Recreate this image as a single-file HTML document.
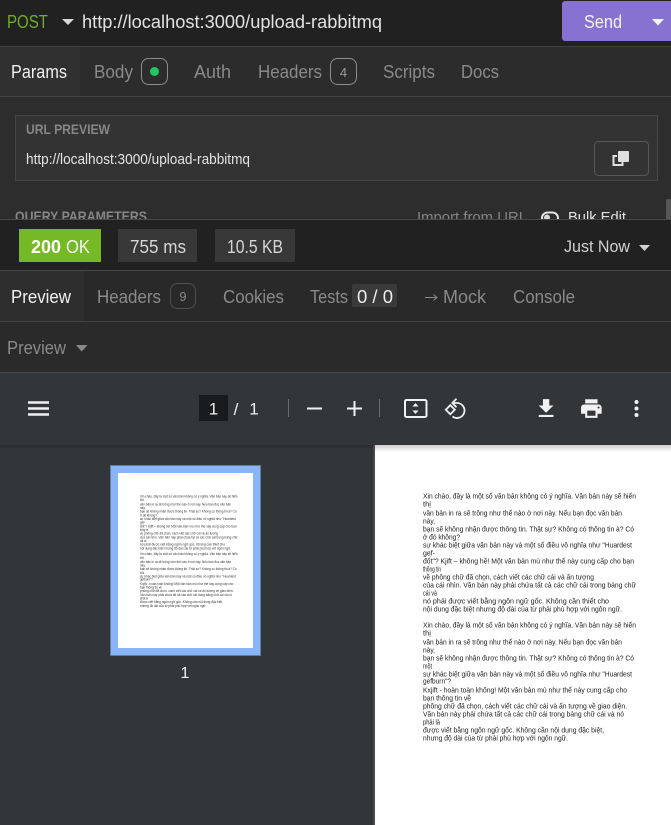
<!DOCTYPE html>
<html lang="vi">
<head>
<meta charset="utf-8">
<title>Insomnia</title>
<style>
html,body{margin:0;padding:0;width:671px;height:825px;overflow:hidden;background:#212121}
svg{display:block;font-family:"Liberation Sans","DejaVu Sans",sans-serif}
.t{font-size:18px}
.m{fill:#8a8a8a}
.a{fill:#f0f0f0}
.p text{font-size:7.3px;fill:#1c1c1c}
.th text{font-size:3.4px;fill:#333}
</style>
</head>
<body>
<svg xmlns="http://www.w3.org/2000/svg" width="671" height="825" viewBox="0 0 671 825">
<defs>
<linearGradient id="sh" x1="0" y1="0" x2="0" y2="1"><stop offset="0" stop-color="#000" stop-opacity=".2"/><stop offset="1" stop-color="#000" stop-opacity="0"/></linearGradient>
</defs>

<!-- top bar -->
<rect width="671" height="46" fill="#212121"/>
<text class="t" x="7" y="28" textLength="41" lengthAdjust="spacingAndGlyphs" fill="#6fae25">POST</text>
<path d="M62 19h12l-6 6z" fill="#d8d8d8"/>
<text class="t" x="82" y="28" textLength="300" lengthAdjust="spacingAndGlyphs" fill="#e2e2e2">http://localhost:3000/upload-rabbitmq</text>
<path d="M565 1h106v40h-106a3 3 0 0 1-3-3v-34a3 3 0 0 1 3-3z" fill="#8672d1"/>
<text class="t" x="584" y="28" textLength="38" lengthAdjust="spacingAndGlyphs" fill="#f4f4f4">Send</text>
<path d="M652 19h12l-6 6.500z" fill="#f4f4f4"/>

<!-- request tabs -->
<rect y="46" width="671" height="51" fill="#2c2c2c"/>
<rect y="46" width="671" height="1" fill="#414141"/>
<rect y="47" width="80" height="49" fill="#303030"/>
<rect y="96" width="671" height="1" fill="#434343"/>
<text class="t a" x="11" y="78" textLength="56" lengthAdjust="spacingAndGlyphs">Params</text>
<text class="t m" x="94" y="78" textLength="39" lengthAdjust="spacingAndGlyphs">Body</text>
<rect x="141.500" y="58.500" width="26" height="26" rx="7" fill="none" stroke="#8c8c8c"/>
<circle cx="154.500" cy="71.500" r="4.500" fill="#21c562"/>
<text class="t m" x="194" y="78" textLength="37" lengthAdjust="spacingAndGlyphs">Auth</text>
<text class="t m" x="258" y="78" textLength="64" lengthAdjust="spacingAndGlyphs">Headers</text>
<rect x="330.500" y="58.500" width="26" height="26" rx="7" fill="none" stroke="#8c8c8c"/>
<text x="343.500" y="77" font-size="13" text-anchor="middle" fill="#9a9a9a">4</text>
<text class="t m" x="383" y="78" textLength="52" lengthAdjust="spacingAndGlyphs">Scripts</text>
<text class="t m" x="461" y="78" textLength="38" lengthAdjust="spacingAndGlyphs">Docs</text>

<!-- params content -->
<rect y="97" width="671" height="123" fill="#2d2d2d"/>
<rect x="15.500" y="115.500" width="642" height="65" fill="#333" stroke="#464646"/>
<text x="26" y="134" font-size="14" font-weight="700" textLength="84" lengthAdjust="spacingAndGlyphs" fill="#868686">URL PREVIEW</text>
<text x="26" y="164" font-size="15" textLength="224" lengthAdjust="spacingAndGlyphs" fill="#e4e4e4">http://localhost:3000/upload-rabbitmq</text>
<rect x="594.500" y="141.500" width="54" height="34" rx="4" fill="none" stroke="#585858"/>
<path d="M617 156h-3.500v9h9v-3" fill="none" stroke="#e0e0e0" stroke-width="2"/>
<rect x="618" y="151" width="11" height="11" rx="1" fill="#dedede"/>
<text x="15" y="221" font-size="14" font-weight="700" textLength="132" lengthAdjust="spacingAndGlyphs" fill="#868686">QUERY PARAMETERS</text>
<text x="417" y="222" font-size="15" textLength="110" lengthAdjust="spacingAndGlyphs" fill="#858585">Import from URL</text>
<rect x="542" y="212.500" width="16" height="11" rx="5.500" fill="none" stroke="#e4e4e4" stroke-width="2"/>
<circle cx="547" cy="217.500" r="3" fill="#d8d8d8"/>
<text x="568" y="222" font-size="15" textLength="58" lengthAdjust="spacingAndGlyphs" fill="#e2e2e2">Bulk Edit</text>
<rect x="666" y="199" width="5" height="22" rx="2" fill="#575757"/>

<!-- status bar -->
<rect y="219" width="671" height="52" fill="#212121"/>
<rect y="219" width="671" height="1" fill="#4a4a4a"/>
<rect x="19" y="229" width="82" height="33" fill="#75ba24"/>
<text x="31" y="253" font-size="18" font-weight="700" textLength="30" lengthAdjust="spacingAndGlyphs" fill="#fff">200</text>
<text x="66" y="253" font-size="18" textLength="24" lengthAdjust="spacingAndGlyphs" fill="#f6f6f6">OK</text>
<rect x="118" y="229" width="79" height="33" fill="#383838"/>
<text x="130" y="253" font-size="18" textLength="56" lengthAdjust="spacingAndGlyphs" fill="#d6d6d6">755 ms</text>
<rect x="215" y="229" width="80" height="33" fill="#383838"/>
<text x="227" y="253" font-size="18" textLength="56" lengthAdjust="spacingAndGlyphs" fill="#d6d6d6">10.5 KB</text>
<text x="564" y="252" font-size="17" textLength="66" lengthAdjust="spacingAndGlyphs" fill="#d2d2d2">Just Now</text>
<path d="M639 245h11l-5.500 6z" fill="#d2d2d2"/>

<!-- response tabs -->
<rect y="270" width="671" height="52" fill="#292929"/>
<rect y="270" width="671" height="1" fill="#464646"/>
<rect y="271" width="84" height="50" fill="#2e2e2e"/>
<rect y="321" width="671" height="1" fill="#434343"/>
<text class="t a" x="11" y="303" textLength="60" lengthAdjust="spacingAndGlyphs">Preview</text>
<text class="t m" x="97" y="303" textLength="64" lengthAdjust="spacingAndGlyphs">Headers</text>
<rect x="170.500" y="283.500" width="25" height="25" rx="7" fill="none" stroke="#4f4f4f"/>
<text x="183" y="301" font-size="12.500" text-anchor="middle" fill="#8a8a8a">9</text>
<text class="t m" x="223" y="303" textLength="61" lengthAdjust="spacingAndGlyphs">Cookies</text>
<text class="t m" x="310" y="303" textLength="38" lengthAdjust="spacingAndGlyphs">Tests</text>
<rect x="352" y="284" width="45" height="23" rx="2" fill="#3a3a3a"/>
<text class="t" x="357" y="303" textLength="36" lengthAdjust="spacingAndGlyphs" fill="#ececec">0 / 0</text>
<path d="M425 297.500h12M433.500 294.500l3.500 3-3.500 3" fill="none" stroke="#8a8a8a" stroke-width="1"/>
<text class="t m" x="443" y="303" textLength="43" lengthAdjust="spacingAndGlyphs">Mock</text>
<text class="t m" x="513" y="303" textLength="62" lengthAdjust="spacingAndGlyphs">Console</text>

<!-- preview mode row -->
<rect y="322" width="671" height="51" fill="#2a2a2a"/>
<rect y="372" width="671" height="1" fill="#474747"/>
<text class="t m" x="7" y="354" textLength="59" lengthAdjust="spacingAndGlyphs">Preview</text>
<path d="M76 345h11.500l-5.750 6.500z" fill="#8a8a8a"/>

<!-- pdf viewer -->
<rect y="373" width="671" height="452" fill="#323639"/>
<rect x="373" y="445" width="2" height="380" fill="#45484c"/>
<rect x="375" y="445" width="296" height="380" fill="#fff"/>
<rect y="445" width="373" height="4" fill="url(#sh)"/>
<rect x="375" y="445" width="296" height="7" fill="url(#sh)"/>

<!-- toolbar -->
<path d="M28 402.500h21M28 408.500h21M28 414.500h21" stroke="#f1f1f1" stroke-width="2.400" fill="none"/>
<rect x="199" y="395" width="29" height="26" fill="#191b1c"/>
<text x="213.500" y="414.500" font-size="17" text-anchor="middle" fill="#f1f1f1">1</text>
<text x="236" y="415" font-size="17" text-anchor="middle" fill="#f1f1f1">/</text>
<text x="254" y="414.500" font-size="17" text-anchor="middle" fill="#f1f1f1">1</text>
<path d="M288.500 399v18M379.500 399v18" stroke="#6a6d70" stroke-width="1"/>
<path d="M307 408.500h15" stroke="#f1f1f1" stroke-width="2"/>
<path d="M347 408.500h15M354.500 401v15" stroke="#f1f1f1" stroke-width="2" fill="none"/>
<rect x="405" y="400" width="21.500" height="17" rx="1.500" fill="none" stroke="#f1f1f1" stroke-width="2"/>
<path d="M415.500 403l3 3.500h-6zM415.500 414l3-3.500h-6z" fill="#f1f1f1"/>
<path d="M445.800 409.700l4.500-4.500 4.500 4.500-4.500 4.500z" fill="none" stroke="#f1f1f1" stroke-width="1.800"/>
<path d="M454 403h3a7.500 7.500 0 1 1-4.500 13.500" fill="none" stroke="#f1f1f1" stroke-width="1.800"/>
<path d="M456.500 398.800l-4.200 4.200 4.200 4.200" fill="none" stroke="#f1f1f1" stroke-width="1.800"/>
<g transform="translate(533.500 396) scale(1.050)"><path d="M19 9h-4V3H9v6H5l7 7 7-7zM5 18v2h14v-2H5z" fill="#f1f1f1"/></g>
<g transform="translate(579 396.200) scale(1.030)"><path d="M19 8H5c-1.660 0-3 1.340-3 3v6h4v4h12v-4h4v-6c0-1.660-1.340-3-3-3zm-3 11H8v-5h8v5zm3-7c-.550 0-1-.450-1-1s.450-1 1-1 1 .450 1 1-.450 1-1 1zm-1-9H6v4h12V3z" fill="#f1f1f1"/></g>
<circle cx="636.500" cy="402" r="2" fill="#f1f1f1"/>
<circle cx="636.500" cy="408.500" r="2" fill="#f1f1f1"/>
<circle cx="636.500" cy="415" r="2" fill="#f1f1f1"/>

<!-- thumbnail -->
<rect x="110.500" y="465.500" width="150" height="190" fill="#8ab4f8" stroke="#5f7ba8"/>
<rect x="118" y="473" width="135" height="175" fill="#fff"/>
<text x="185" y="678" font-size="16" text-anchor="middle" fill="#f1f1f1">1</text>
<g class="th">
<text x="140" y="497.500" textLength="97.600" lengthAdjust="spacingAndGlyphs">Xin chào, đây là một số văn bản không có ý nghĩa. Văn bản này sẽ hiển</text>
<text x="140" y="501.200" textLength="3.700" lengthAdjust="spacingAndGlyphs">thị</text>
<text x="140" y="505.300" textLength="91" lengthAdjust="spacingAndGlyphs">văn bản in ra sẽ trông như thế nào ở nơi này. Nếu bạn đọc văn bản</text>
<text x="140" y="509" textLength="5.500" lengthAdjust="spacingAndGlyphs">này,</text>
<text x="140" y="512.600" textLength="96.600" lengthAdjust="spacingAndGlyphs">bạn sẽ không nhận được thông tin. Thật sự? Không có thông tin à? Có</text>
<text x="140" y="516.300" textLength="17" lengthAdjust="spacingAndGlyphs">ở đó không?</text>
<text x="140" y="520" textLength="95.700" lengthAdjust="spacingAndGlyphs">sự khác biệt giữa văn bản này và một số điều vô nghĩa như "Huardest</text>
<text x="140" y="523.600" textLength="5.500" lengthAdjust="spacingAndGlyphs">gef-</text>
<text x="140" y="527.300" textLength="96.600" lengthAdjust="spacingAndGlyphs">đốt"? Kjift – không hề! Một văn bản mù như thế này cung cấp cho bạn</text>
<text x="140" y="531" textLength="8" lengthAdjust="spacingAndGlyphs">thông tin</text>
<text x="140" y="534.600" textLength="78" lengthAdjust="spacingAndGlyphs">về phông chữ đã chọn, cách viết các chữ cái và ấn tượng</text>
<text x="140" y="538.300" textLength="97.600" lengthAdjust="spacingAndGlyphs">của cái nhìn. Văn bản này phải chứa tất cả các chữ cái trong bảng chữ</text>
<text x="140" y="541.900" textLength="6.400" lengthAdjust="spacingAndGlyphs">cái và</text>
<text x="140" y="545.600" textLength="85" lengthAdjust="spacingAndGlyphs">nó phải được viết bằng ngôn ngữ gốc. Không cần thiết cho</text>
<text x="140" y="549.300" textLength="91" lengthAdjust="spacingAndGlyphs">nội dung đặc biệt nhưng độ dài của từ phải phù hợp với ngôn ngữ.</text>
<text x="140" y="555.100" textLength="97.600" lengthAdjust="spacingAndGlyphs">Xin chào, đây là một số văn bản không có ý nghĩa. Văn bản này sẽ hiển</text>
<text x="140" y="558.800" textLength="3.700" lengthAdjust="spacingAndGlyphs">thị</text>
<text x="140" y="562.900" textLength="91" lengthAdjust="spacingAndGlyphs">văn bản in ra sẽ trông như thế nào ở nơi này. Nếu bạn đọc văn bản</text>
<text x="140" y="566.500" textLength="5.500" lengthAdjust="spacingAndGlyphs">này,</text>
<text x="140" y="570.200" textLength="96.600" lengthAdjust="spacingAndGlyphs">bạn sẽ không nhận được thông tin. Thật sự? Không có thông tin à? Có</text>
<text x="140" y="573.900" textLength="4" lengthAdjust="spacingAndGlyphs">một</text>
<text x="140" y="577.500" textLength="95.700" lengthAdjust="spacingAndGlyphs">sự khác biệt giữa văn bản này và một số điều vô nghĩa như "Huardest</text>
<text x="140" y="580.700" textLength="12.800" lengthAdjust="spacingAndGlyphs">gefburn"?</text>
<text x="140" y="584.900" textLength="93.400" lengthAdjust="spacingAndGlyphs">Kxjift - hoàn toàn không! Một văn bản mù như thế này cung cấp cho</text>
<text x="140" y="588.500" textLength="22" lengthAdjust="spacingAndGlyphs">bạn thông tin về</text>
<text x="140" y="592.200" textLength="93.400" lengthAdjust="spacingAndGlyphs">phông chữ đã chọn, cách viết các chữ cái và ấn tượng về giao diện.</text>
<text x="140" y="595.900" textLength="92" lengthAdjust="spacingAndGlyphs">Văn bản này phải chứa tất cả các chữ cái trong bảng chữ cái và nó</text>
<text x="140" y="599.500" textLength="7.800" lengthAdjust="spacingAndGlyphs">phải là</text>
<text x="140" y="603.200" textLength="83" lengthAdjust="spacingAndGlyphs">được viết bằng ngôn ngữ gốc. Không cần nội dung đặc biệt,</text>
<text x="140" y="606.900" textLength="66.400" lengthAdjust="spacingAndGlyphs">nhưng độ dài của từ phải phù hợp với ngôn ngữ.</text>
</g>

<!-- page text -->
<g class="p">
<text x="423" y="498.500" textLength="213" lengthAdjust="spacingAndGlyphs">Xin chào, đây là một số văn bản không có ý nghĩa. Văn bản này sẽ hiển</text>
<text x="423" y="506.500" textLength="8" lengthAdjust="spacingAndGlyphs">thị</text>
<text x="423" y="515.500" textLength="199" lengthAdjust="spacingAndGlyphs">văn bản in ra sẽ trông như thế nào ở nơi này. Nếu bạn đọc văn bản</text>
<text x="423" y="523.500" textLength="12" lengthAdjust="spacingAndGlyphs">này,</text>
<text x="423" y="531.500" textLength="211" lengthAdjust="spacingAndGlyphs">bạn sẽ không nhận được thông tin. Thật sự? Không có thông tin à? Có</text>
<text x="423" y="539.500" textLength="37" lengthAdjust="spacingAndGlyphs">ở đó không?</text>
<text x="423" y="547.500" textLength="209" lengthAdjust="spacingAndGlyphs">sự khác biệt giữa văn bản này và một số điều vô nghĩa như "Huardest</text>
<text x="423" y="555.500" textLength="12" lengthAdjust="spacingAndGlyphs">gef-</text>
<text x="423" y="563.500" textLength="211" lengthAdjust="spacingAndGlyphs">đốt"? Kjift – không hề! Một văn bản mù như thế này cung cấp cho bạn</text>
<text x="423" y="571.500" textLength="18" lengthAdjust="spacingAndGlyphs">thông tin</text>
<text x="423" y="579.500" textLength="171" lengthAdjust="spacingAndGlyphs">về phông chữ đã chọn, cách viết các chữ cái và ấn tượng</text>
<text x="423" y="587.500" textLength="213" lengthAdjust="spacingAndGlyphs">của cái nhìn. Văn bản này phải chứa tất cả các chữ cái trong bảng chữ</text>
<text x="423" y="595.500" textLength="14" lengthAdjust="spacingAndGlyphs">cái và</text>
<text x="423" y="603.500" textLength="186" lengthAdjust="spacingAndGlyphs">nó phải được viết bằng ngôn ngữ gốc. Không cần thiết cho</text>
<text x="423" y="611.500" textLength="199" lengthAdjust="spacingAndGlyphs">nội dung đặc biệt nhưng độ dài của từ phải phù hợp với ngôn ngữ.</text>
<text x="423" y="627.500" textLength="213" lengthAdjust="spacingAndGlyphs">Xin chào, đây là một số văn bản không có ý nghĩa. Văn bản này sẽ hiển</text>
<text x="423" y="635.500" textLength="8" lengthAdjust="spacingAndGlyphs">thị</text>
<text x="423" y="644.500" textLength="199" lengthAdjust="spacingAndGlyphs">văn bản in ra sẽ trông như thế nào ở nơi này. Nếu bạn đọc văn bản</text>
<text x="423" y="652.500" textLength="12" lengthAdjust="spacingAndGlyphs">này,</text>
<text x="423" y="660.500" textLength="211" lengthAdjust="spacingAndGlyphs">bạn sẽ không nhận được thông tin. Thật sự? Không có thông tin à? Có</text>
<text x="423" y="668.500" textLength="9" lengthAdjust="spacingAndGlyphs">một</text>
<text x="423" y="676.500" textLength="209" lengthAdjust="spacingAndGlyphs">sự khác biệt giữa văn bản này và một số điều vô nghĩa như "Huardest</text>
<text x="423" y="683.500" textLength="28" lengthAdjust="spacingAndGlyphs">gefburn"?</text>
<text x="423" y="692.500" textLength="204" lengthAdjust="spacingAndGlyphs">Kxjift - hoàn toàn không! Một văn bản mù như thế này cung cấp cho</text>
<text x="423" y="700.500" textLength="48" lengthAdjust="spacingAndGlyphs">bạn thông tin về</text>
<text x="423" y="708.500" textLength="204" lengthAdjust="spacingAndGlyphs">phông chữ đã chọn, cách viết các chữ cái và ấn tượng về giao diện.</text>
<text x="423" y="716.500" textLength="201" lengthAdjust="spacingAndGlyphs">Văn bản này phải chứa tất cả các chữ cái trong bảng chữ cái và nó</text>
<text x="423" y="724.500" textLength="17" lengthAdjust="spacingAndGlyphs">phải là</text>
<text x="423" y="732.500" textLength="181" lengthAdjust="spacingAndGlyphs">được viết bằng ngôn ngữ gốc. Không cần nội dung đặc biệt,</text>
<text x="423" y="740.500" textLength="145" lengthAdjust="spacingAndGlyphs">nhưng độ dài của từ phải phù hợp với ngôn ngữ.</text>
</g>
</svg>
</body>
</html>
